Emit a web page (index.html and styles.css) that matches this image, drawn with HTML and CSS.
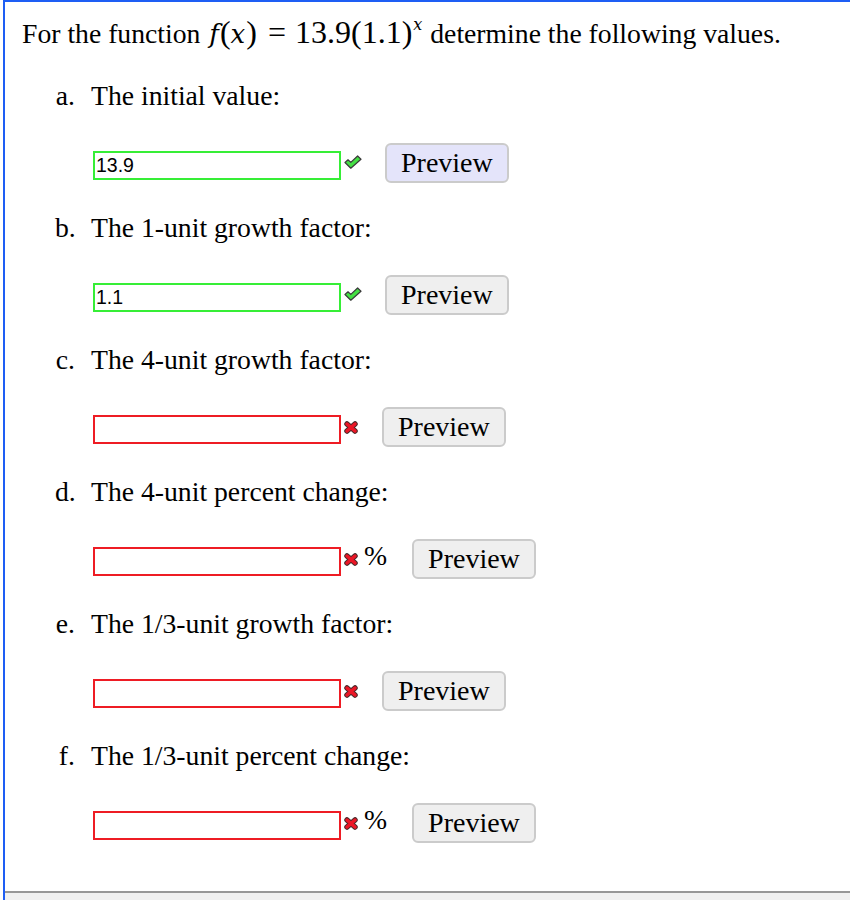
FILE: index.html
```html
<html>
  <head>
    <title>Exponential growth problem</title>
    <meta name="viewport" content="width=device-width, initial-scale=1">
    <link rel="stylesheet" href="styles.css">
  </head>
  <body>
    <div class="page">
      <div class="problem">
        <p class="intro">For the function <span class="math"><i>f</i>(<i>x</i>)<span class="eq">=</span>13.9(1.1)<sup><i>x</i></sup></span> determine the following values.</p>

        <div class="item">
          <div class="label"><span class="marker">a.</span>The initial value:</div>
          <div class="row">
            <input class="answer correct" type="text" value="13.9">
            <svg class="icon check" width="18" height="14" viewBox="0 0 18 14"><polygon points="1,7.5 4,4.8 6.8,7.4 13.6,1 17,4.2 6.8,13.2" fill="#44e044" stroke="#3a3a3a" stroke-width="1.2" stroke-linejoin="round"/></svg>
            <button class="preview hover">Preview</button>
          </div>
        </div>

        <div class="item">
          <div class="label"><span class="marker">b.</span>The 1-unit growth factor:</div>
          <div class="row">
            <input class="answer correct" type="text" value="1.1">
            <svg class="icon check" width="18" height="14" viewBox="0 0 18 14"><polygon points="1,7.5 4,4.8 6.8,7.4 13.6,1 17,4.2 6.8,13.2" fill="#44e044" stroke="#3a3a3a" stroke-width="1.2" stroke-linejoin="round"/></svg>
            <button class="preview">Preview</button>
          </div>
        </div>

        <div class="item">
          <div class="label"><span class="marker">c.</span>The 4-unit growth factor:</div>
          <div class="row">
            <input class="answer wrong" type="text" value="">
            <svg class="icon cross" width="14" height="13" viewBox="0 0 14 13"><path d="M3 3 L11 10 M11 3 L3 10" stroke="#4a2a2a" stroke-width="5.5" stroke-linecap="round"/><path d="M3 3 L11 10 M11 3 L3 10" stroke="#ec1626" stroke-width="3.5" stroke-linecap="round"/></svg>
            <button class="preview">Preview</button>
          </div>
        </div>

        <div class="item">
          <div class="label"><span class="marker">d.</span>The 4-unit percent change:</div>
          <div class="row">
            <input class="answer wrong" type="text" value="">
            <svg class="icon cross" width="14" height="13" viewBox="0 0 14 13"><path d="M3 3 L11 10 M11 3 L3 10" stroke="#4a2a2a" stroke-width="5.5" stroke-linecap="round"/><path d="M3 3 L11 10 M11 3 L3 10" stroke="#ec1626" stroke-width="3.5" stroke-linecap="round"/></svg>
            <span class="unit">%</span>
            <button class="preview">Preview</button>
          </div>
        </div>

        <div class="item">
          <div class="label"><span class="marker">e.</span>The 1/3-unit growth factor:</div>
          <div class="row">
            <input class="answer wrong" type="text" value="">
            <svg class="icon cross" width="14" height="13" viewBox="0 0 14 13"><path d="M3 3 L11 10 M11 3 L3 10" stroke="#4a2a2a" stroke-width="5.5" stroke-linecap="round"/><path d="M3 3 L11 10 M11 3 L3 10" stroke="#ec1626" stroke-width="3.5" stroke-linecap="round"/></svg>
            <button class="preview">Preview</button>
          </div>
        </div>

        <div class="item">
          <div class="label"><span class="marker">f.</span>The 1/3-unit percent change:</div>
          <div class="row">
            <input class="answer wrong" type="text" value="">
            <svg class="icon cross" width="14" height="13" viewBox="0 0 14 13"><path d="M3 3 L11 10 M11 3 L3 10" stroke="#4a2a2a" stroke-width="5.5" stroke-linecap="round"/><path d="M3 3 L11 10 M11 3 L3 10" stroke="#ec1626" stroke-width="3.5" stroke-linecap="round"/></svg>
            <span class="unit">%</span>
            <button class="preview">Preview</button>
          </div>
        </div>
      </div>
      <div class="footer"></div>
    </div>
  </body>
</html>
```

FILE: styles.css
```css
* { box-sizing: border-box; }
body {
  margin: 0;
  background: #fff;
  color: #000;
  font-family: "Liberation Serif", "Times New Roman", serif;
  font-size: 27.7px;
  line-height: 32px;
}

.page {
  margin-left: 3px;
  min-height: 900px;
  border-left: 2px solid #1e5ef4;
  border-top: 2px solid #1e5ef4;
  display: flex;
  flex-direction: column;
}

.problem {
  padding: 16px 0 19px 17px;
}

.intro {
  margin: 0 0 30px;
  height: 32px;
  white-space: nowrap;
}

.math {
  margin-left: 2px;
  font-size: 32px;
  line-height: 0;
}

.math i {
  font-family: "DejaVu Serif", serif;
  font-size: 26px;
  margin-right: 1px;
}

.math .eq {
  margin: 0 9px 0 11px;
}

.math sup {
  font-size: 18px;
  line-height: 0;
  vertical-align: 13px;
  margin-left: 1px;
}

.math sup i {
  font-size: 16px;
}

.label {
  margin-left: 33px;
  display: flex;
}

.marker {
  width: 20px;
  margin-right: 16px;
  text-align: right;
  white-space: nowrap;
}

.row {
  margin: 31px 0 29px 71px;
  height: 40px;
  display: flex;
  align-items: flex-start;
}

.answer {
  width: 248px;
  height: 29px;
  margin: 8px 0 0;
  padding: 0 1px;
  border: 2px solid;
  outline: none;
  font-family: "Liberation Sans", Arial, sans-serif;
  font-size: 19.5px;
  background: #fff;
}

.answer.correct { border-color: #36ee36; }
.answer.wrong { border-color: #ee1c24; }

.icon {
  margin-left: 3px;
  flex: none;
}

.check {
  margin-top: 12px;
  margin-right: 23px;
}

.cross {
  margin-top: 14px;
  margin-right: 24px;
}

.cross + .unit {
  margin-left: -18px;
}

.unit {
  margin-top: 1px;
  margin-right: 25px;
}

.preview {
  height: 40px;
  padding: 2px 14px;
  border: 2px solid #cbcbcb;
  border-radius: 6px;
  background: #efefef;
  color: #000;
  font-family: "Liberation Serif", "Times New Roman", serif;
  font-size: 28px;
  line-height: 32px;
}

.preview.hover {
  background: #e4e4fa;
}

.footer {
  flex: 1;
  border-top: 2px solid #979797;
  background: #f0f0f0;
}
```
